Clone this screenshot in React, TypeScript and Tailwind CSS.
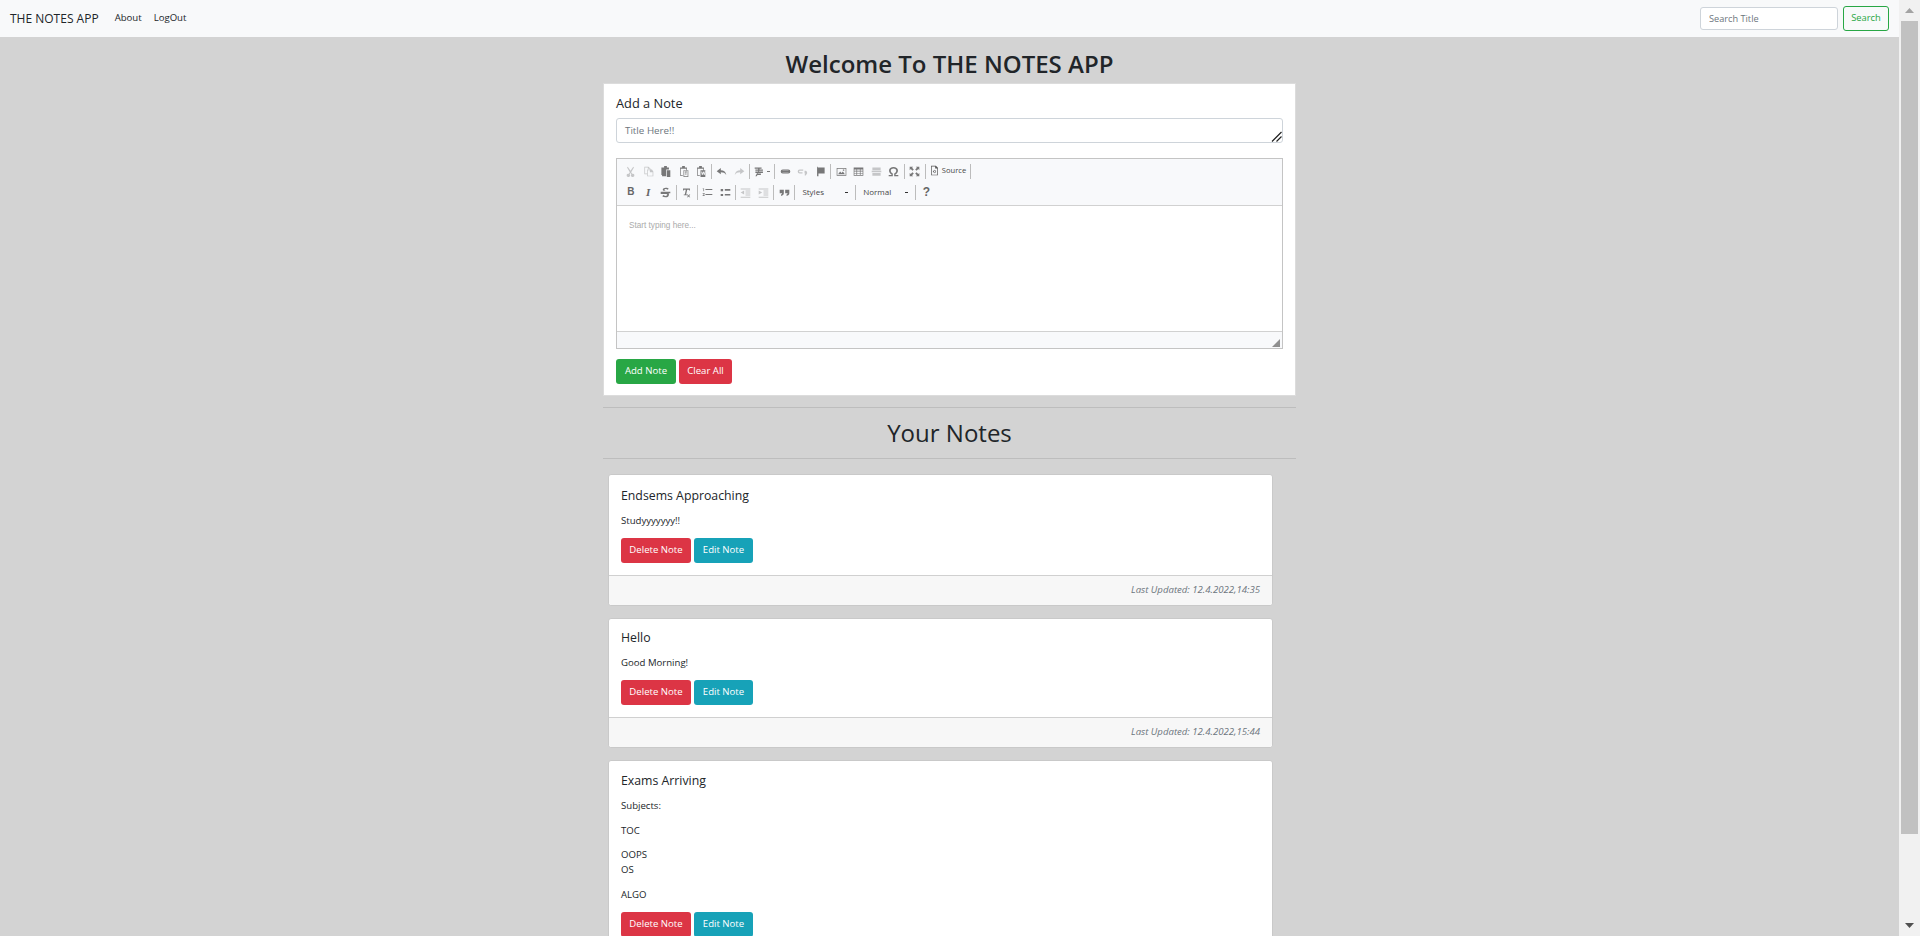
import React from 'react';

const FONT = "font-['Open_Sans',sans-serif]";

// ─── Editor toolbar icons (16 box, filled shapes) ─────────────────────────────
const ICONS: Record<string, React.ReactNode> = {
  cut: (
    <path d="M4 1l4 6 4-6 1 1-4 7 1.5 2.2A2.5 2.5 0 1 1 9.200 12L8 10l-1.200 2a2.500 2.500 0 1 1-1.300-.8L7 9 3 2z" />
  ),
  copy: <path d="M2 1h6l3 3v1h2l2 3v7H6v-3H2zm1 1v9h3V5h4V4H7V2zm4 4v8h7V9h-4V6z" />,
  paste: <path d="M6 0h4v2h3v2h1v0h-1v1H9v10H3v-2H2V2h4zM10 6h5v10H10z" />,
  pasteText: <path d="M6 0h4v2h3v4h-1V4H4v9h3v1H3V2h3zM8 6h7v10H8zm1 1v8h5V7zm1 1h3v1h-1v4h-1V9h-1z" />,
  pasteWord: <path d="M6 0h4v2h3v4h-1V4H4v9h3v1H3V2h3zM8 6h7v10H8zm1 2l1 5h1l1-3 1 3h1l1-5h-1l-.5 3-1-3h-1l-1 3-.5-3z" />,
  undo: <path d="M7 3v3c4 0 7 2 8 7-2-3-4-4-8-4v3L1 7.500z" />,
  redo: <path d="M9 3v3C5 6 2 8 1 13c2-3 4-4 8-4v3l6-4.500z" />,
  spell: (
    <path d="M1 2h10v2H8v1h5v2H8l-1 1h6v2H6l-1 1h5v2H5l-1 2H2l1-2 1-2 1-1H2V8h4V7H2V5h4V4H1z" />
  ),
  link: <path d="M4 5h8a3 3 0 0 1 0 6H4a3 3 0 0 1 0-6zm0 2a1 1 0 0 0 0 2h8a1 1 0 0 0 0-2z M3 7.300h10v1.400H3z" />,
  unlink: <path d="M4 5h5v2H4a1 1 0 0 0 0 2h4v2H4a3 3 0 0 1 0-6zm7 2h1a3 3 0 0 1 2 5l-2 2-1-1 1-2h-1z" />,
  flag: <path d="M3 1h1v1h10v9H5v4H3z" />,
  image: <path d="M1 3h14v11H1zm1 1v9h12V4zm1 8l3-4 2 2 2-2 3 4zm7-7h2v2h-2z" />,
  table: <path d="M1 2h14v12H1zm1 3v2h3V5zm4 0v2h4V5zm5 0v2h3V5zM2 8v2h3V8zm4 0v2h4V8zm5 0v2h3V8zM2 11v2h3v-2zm4 0v2h4v-2zm5 0v2h3v-2z" />,
  hr: <path d="M2 2h12v4H2zM1 7h14v2H1zM2 10h12v4H2z" />,
  omega: (
    <path d="M1 13h4v-1C3 11 1.500 9 1.500 6.500 1.500 3.500 4.500 1.500 8 1.500s6.500 2 6.500 5c0 2.500-1.500 4.500-3.500 5.500v1h4v2H9v-4c2-1 3-2.500 3-4.500S10 3.500 8 3.500 4 4.500 4 6.500 5 10 7 11v4H1z" />
  ),
  maximize: <path d="M1 1h5L4.500 2.500 7 5 5 7 2.500 4.500 1 6zm14 0v5l-1.500-1.500L11 7 9 5l2.500-2.500L10 1zM1 15v-5l1.500 1.500L5 9l2 2-2.500 2.500L6 15zm14 0h-5l1.500-1.500L9 11l2-2 2.500 2.500L15 10z" />,
  source: <path d="M3 1h7l3 3v11H3zm1 1v12h8V5H9V2zm1.500 7.500L8 7v1.500L6.800 9.500 8 10.500V12zm5 0L8.500 12v-1.500l1.200-1-1.200-1V7z" />,
  strike: <path d="M4 4c0-2 2-3 4.500-3 2 0 3.500.5 4 1l-1 2c-1-.6-2-1-3-1-1.500 0-2 .5-2 1s.5 1 2 1.500h-3C4.500 5.200 4 4.800 4 4zM1 7h14v2h-2.500c.5.500.5 1 .5 1.800C13 13.500 11 15 8 15c-2 0-3.500-.5-4.500-1.200l1-2c1 .7 2 1.200 3.500 1.200s2.500-.6 2.500-1.700c0-.6-.4-1-1.500-1.300H1z" />,
  removeFormat: <path d="M3 2h10v3h-1l-.5-1H9L7.500 11H9v1H4v-1h1.500L7 4H4.500L4 5H3zM10 11l1 1.500L12 11h1.500l-1.700 2.200L13.500 15H12l-1-1.300L10 15H8.500l1.700-1.800L8.500 11z" />,
  ol: <path d="M1 2h2v4H2V3H1zM5 3h10v1.500H5zM1 9h3v1L2 12h2v1H1v-1l2-2H1zM5 10h10v1.500H5z" />,
  ul: <path d="M1 3h3.500v3H1zM7 3h8v2.500H7zM1 10h3.500v3H1zM7 10h8v2.500H7z" />,
  outdent: <path d="M1 2h14v1.500H1zM8 5h7v1.500H8zM8 8h7v1.500H8zM8 11h7v1.500H8zM1 14h14v1.500H1zM6 5v6L1 8z" />,
  indent: <path d="M1 2h14v1.500H1zM8 5h7v1.500H8zM8 8h7v1.500H8zM8 11h7v1.500H8zM1 14h14v1.500H1zM1 5v6l5-3z" />,
  quote: <path d="M1 4h6v5c0 2-1.500 3.500-4 4v-2c1-.3 1.500-1 1.500-2H1zM9 4h6v5c0 2-1.500 3.500-4 4v-2c1-.3 1.500-1 1.500-2H9z" />,
};

function ToolIcon({ name, faded }: { name: string; faded?: boolean }) {
  return (
    <span className={`flex h-4 w-[17.5px] shrink-0 items-center justify-center ${faded ? 'opacity-25' : 'opacity-65'}`}>
      <svg width="11" height="11" viewBox="0 0 16 16" fill="#333">
        {ICONS[name]}
      </svg>
    </span>
  );
}

function Sep() {
  return <span className="mx-[1.2px] h-[15px] w-px shrink-0 bg-[#bcbcbc]" />;
}

function Combo({ label, w }: { label: string; w: string }) {
  return (
    <span className={`flex shrink-0 items-center justify-between pl-[6px] pr-[6px] text-[8px] text-[#484848] ${w}`}>
      <span>{label}</span>
      <span className="h-px w-[3px] bg-[#333]" />
    </span>
  );
}

function EditorToolbar() {
  return (
    <div className="flex h-[47px] flex-col gap-[5px] border-b border-[#d1d1d1] bg-[#f8f9fb] pl-[5px] pt-[4px]">
      <div className="flex h-4 items-center">
        <ToolIcon name="cut" faded />
        <ToolIcon name="copy" faded />
        <ToolIcon name="paste" />
        <ToolIcon name="pasteText" />
        <ToolIcon name="pasteWord" />
        <Sep />
        <ToolIcon name="undo" />
        <ToolIcon name="redo" faded />
        <Sep />
        <span className="flex w-[22px] shrink-0 items-center justify-center gap-[2px] opacity-65">
          <svg width="11" height="11" viewBox="0 0 16 16" fill="#333">
            {ICONS.spell}
          </svg>
          <span className="h-px w-[3px] bg-[#333]" />
        </span>
        <Sep />
        <ToolIcon name="link" />
        <ToolIcon name="unlink" faded />
        <ToolIcon name="flag" />
        <Sep />
        <ToolIcon name="image" />
        <ToolIcon name="table" />
        <ToolIcon name="hr" faded />
        <ToolIcon name="omega" />
        <Sep />
        <ToolIcon name="maximize" />
        <Sep />
        <span className="flex w-[42.5px] shrink-0 items-center gap-[2px] pl-[2px] text-[7.6px] text-[#484848]">
          <svg width="11" height="11" viewBox="0 0 16 16" fill="#555" className="shrink-0">
            {ICONS.source}
          </svg>
          <span>Source</span>
        </span>
        <Sep />
      </div>
      <div className="flex h-4 items-center">
        <span className="flex h-4 w-[17.5px] shrink-0 items-center justify-center font-['Liberation_Sans',sans-serif] text-[10px] font-bold leading-none text-[#666]">
          B
        </span>
        <span className="flex h-4 w-[17.5px] shrink-0 items-center justify-center font-['Liberation_Serif',serif] text-[11px] font-bold italic leading-none text-[#666]">
          I
        </span>
        <ToolIcon name="strike" />
        <Sep />
        <ToolIcon name="removeFormat" />
        <Sep />
        <ToolIcon name="ol" />
        <ToolIcon name="ul" />
        <Sep />
        <ToolIcon name="outdent" faded />
        <ToolIcon name="indent" faded />
        <Sep />
        <ToolIcon name="quote" />
        <Sep />
        <Combo label="Styles" w="w-[57.5px]" />
        <Sep />
        <Combo label="Normal" w="w-[57px]" />
        <Sep />
        <span className="flex h-4 w-[17.5px] shrink-0 items-center justify-center font-['Liberation_Sans',sans-serif] text-[12px] font-bold leading-none text-[#666]">
          ?
        </span>
      </div>
    </div>
  );
}

// ─── Note card ────────────────────────────────────────────────────────────────
interface Note {
  title: string;
  lines: React.ReactNode[];
  updated: string;
  pt: string;
}

const NOTES: Note[] = [
  { title: 'Endsems Approaching', lines: ['Studyyyyyyy!!'], updated: '12.4.2022,14:35', pt: 'pt-[14px]' },
  { title: 'Hello', lines: ['Good Morning!'], updated: '12.4.2022,15:44', pt: 'pt-[12px]' },
  {
    title: 'Exams Arriving',
    lines: [
      'Subjects:',
      'TOC',
      <>
        OOPS
        <br />
        OS
      </>,
      'ALGO',
    ],
    updated: '12.4.2022,16:10',
    pt: 'pt-[13px]',
  },
];

function NoteCard({ note }: { note: Note }) {
  return (
    <div className="ml-[5px] w-[665px] shrink-0 rounded-[3px] border border-[#c9c9c9] bg-white">
      <div className={`px-3 pb-3 ${note.pt}`}>
        <h5 className="text-[12.3px] font-normal leading-[14px] text-[#212529]">{note.title}</h5>
        <div className="mt-[10px] flex flex-col gap-[9.6px] text-[9.6px] leading-[15px] text-[#212529]">
          {note.lines.map((line, i) => (
            <p key={i}>{line}</p>
          ))}
        </div>
        <div className="mt-[10px] flex gap-[3px]">
          <button className="h-[25px] w-[70px] rounded-[3px] bg-[#dc3545] text-[9.6px] text-white">Delete Note</button>
          <button className="h-[25px] w-[59px] rounded-[3px] bg-[#17a2b8] text-[9.6px] text-white">Edit Note</button>
        </div>
      </div>
      <div className="flex h-[30px] items-center justify-end rounded-b-[3px] border-t border-[#d0d0d0] bg-[#f7f7f7] pr-3 text-[9.600px] italic text-[#6c757d]">
        Last Updated: {note.updated}
      </div>
    </div>
  );
}

// ─── Page ─────────────────────────────────────────────────────────────────────
export default function App() {
  return (
    <div className={`flex h-[936px] w-full overflow-hidden bg-[#d3d3d3] ${FONT}`}>
      <div className="flex min-w-0 flex-1 flex-col">
        <nav className="flex h-[37px] shrink-0 items-center justify-between bg-[#f8f9fa] px-[10px]">
          <div className="flex items-center">
            <span className="text-[12px] text-[#212529]">THE NOTES APP</span>
            <span className="ml-4 text-[9.6px] text-[#212529]">About</span>
            <span className="ml-3 text-[9.6px] text-[#212529]">LogOut</span>
          </div>
          <form className="flex items-center gap-[5px]">
            <input
              placeholder="Search Title"
              className="h-[23px] w-[138px] rounded-[3px] border border-[#ced4da] bg-white px-2 text-[9.2px] outline-none placeholder:text-[#6c757d]"
            />
            <button type="button" className="h-[25px] w-[46px] rounded-[3px] border border-[#28a745] text-[9.4px] text-[#28a745]">
              Search
            </button>
          </form>
        </nav>

        <main className="mx-auto flex w-[693px] flex-col">
          <h1 className="flex h-[46px] shrink-0 items-center justify-center pt-[7px] text-[24px] font-semibold text-[#212529]">
            Welcome To THE NOTES APP
          </h1>

          <section className="shrink-0 border border-[#dcdcdc] bg-white px-3 pb-[11px] pt-3">
            <h5 className="text-[12.800px] font-normal leading-[14px] text-[#212529]">Add a Note</h5>
            <div className="relative mt-2">
              <textarea
                rows={1}
                placeholder="Title Here!!"
                className="block h-[25px] w-full resize-none rounded-[3px] border border-[#ced4da] px-2 py-[4px] text-[9.800px] leading-[15px] outline-none placeholder:text-[#6c757d]"
              />
              <svg width="11" height="11" viewBox="0 0 11 11" stroke="#222" strokeWidth="1.200" className="absolute bottom-[1px] right-[1px]">
                <path d="M1 10.500L10.500 1M5.500 10.500L10.500 5.500" />
              </svg>
            </div>
            <div className="mt-[15px] flex h-[191px] flex-col border border-[#c4c4c4]">
              <EditorToolbar />
              <div className="h-[125px] bg-white pl-3 pt-[14px] font-['Liberation_Sans',sans-serif] text-[8.2px] text-[#aaa]">
                Start typing here...
              </div>
              <div className="flex h-[17px] items-end justify-end border-t border-[#d1d1d1] bg-[#f8f9fb] pb-[1px] pr-[2px]">
                <svg width="8" height="8" viewBox="0 0 8 8" fill="#8f8f8f">
                  <path d="M8 0v8H0z" />
                </svg>
              </div>
            </div>
            <div className="mt-[10px] flex gap-[3px]">
              <button className="h-[25px] w-[60px] rounded-[3px] bg-[#28a745] text-[9.6px] text-white">Add Note</button>
              <button className="h-[25px] w-[53px] rounded-[3px] bg-[#dc3545] text-[9.6px] text-white">Clear All</button>
            </div>
          </section>

          <hr className="mt-[11px] shrink-0 border-t border-[#bdbdbd]" />
          <h2 className="flex h-[50px] shrink-0 items-center justify-center text-[24px] font-normal text-[#212529]">
            Your Notes
          </h2>
          <hr className="shrink-0 border-t border-[#bdbdbd]" />

          <div className="mt-[15px] flex flex-col gap-3">
            {NOTES.map((note) => (
              <NoteCard key={note.title} note={note} />
            ))}
          </div>
        </main>
      </div>

      {/* Window scrollbar */}
      <div className="flex w-[21px] shrink-0 flex-col items-center bg-[#f1f1f1]">
        <div className="flex h-[21px] w-full items-center justify-center">
          <svg width="9" height="5" viewBox="0 0 9 5" fill="#a3a3a3">
            <path d="M4.500 0L9 5H0z" />
          </svg>
        </div>
        <div className="h-[813px] w-[17px] bg-[#c1c1c1]" />
        <div className="flex flex-1 items-end pb-[8px]">
          <svg width="9" height="5" viewBox="0 0 9 5" fill="#505050">
            <path d="M0 0h9L4.500 5z" />
          </svg>
        </div>
      </div>
    </div>
  );
}
